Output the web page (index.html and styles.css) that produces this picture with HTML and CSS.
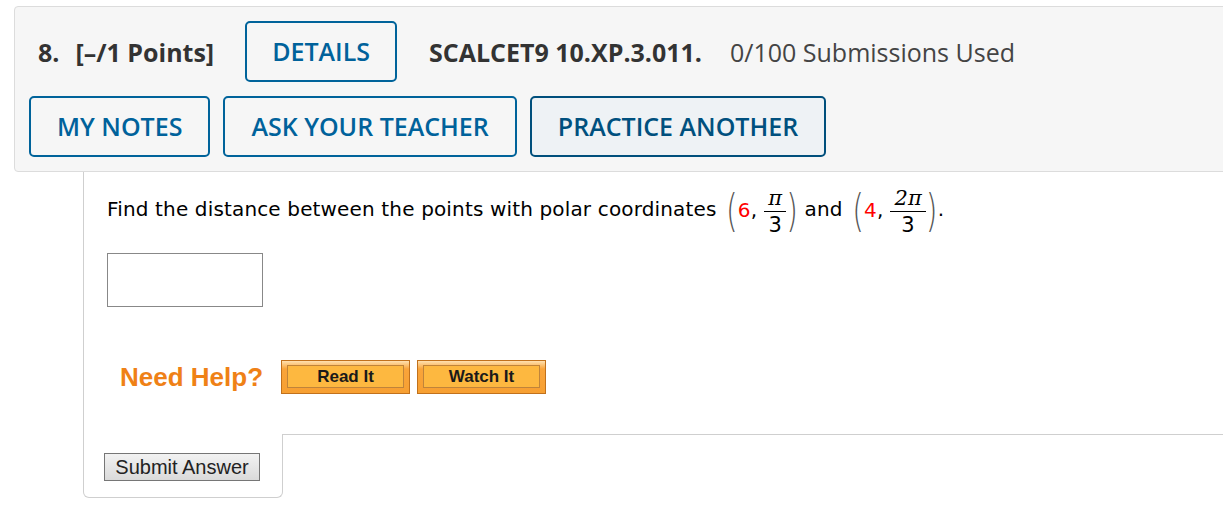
FILE: index.html
```html
<!DOCTYPE html>
<html>
<head>
<meta charset="utf-8">
<link rel="stylesheet" href="styles.css">
</head>
<body>
<div class="page">
  <div class="panel">
    <div class="row row1">
      <span class="qnum">8.<span class="pts">[–/1 Points]</span></span>
      <button class="btn">DETAILS</button>
      <span class="code">SCALCET9 10.XP.3.011.</span>
      <span class="subs">0/100 Submissions Used</span>
    </div>
    <div class="row row2">
      <button class="btn">MY NOTES</button>
      <button class="btn">ASK YOUR TEACHER</button>
      <button class="btn btn-alt">PRACTICE ANOTHER</button>
    </div>
  </div>
  <div class="question">
    <div class="qbody">
      <p class="prompt">Find the distance between the points with polar coordinates <span class="math"><span class="paren">(</span><span class="red">6</span><span class="comma">,</span><span class="frac"><span class="num">π</span><span class="den">3</span></span><span class="paren">)</span></span> and <span class="math"><span class="paren">(</span><span class="red">4</span><span class="comma">,</span><span class="frac"><span class="num">2π</span><span class="den">3</span></span><span class="paren">)</span></span>.</p>
      <input class="answer" type="text">
      <div class="help">
        <span class="help-label">Need Help?</span>
        <span class="helpbtn"><span>Read It</span></span>
        <span class="helpbtn"><span>Watch It</span></span>
      </div>
    </div>
    <div class="qfoot">
      <div class="tab"><button class="submit">Submit Answer</button></div>
      <div class="fill"></div>
    </div>
  </div>
</div>
</body>
</html>
```
FILE: styles.css
```css
html, body {
  margin: 0;
  padding: 0;
  background: #fff;
  overflow: hidden;
}
.page {
  padding: 6px 0 0 14px;
  width: 1300px;
}
.panel {
  background: #f6f6f6;
  border: 1px solid #dcdcdc;
  border-radius: 4px 0 0 4px;
  padding: 14px 0 14px 14px;
  font-family: "Open Sans", sans-serif;
  color: #333;
}
.row {
  display: flex;
  align-items: center;
}
.row1 {
  margin-bottom: 14px;
}
.row2 {
  gap: 13px;
}
.qnum {
  font-weight: 700;
  font-size: 25px;
  margin-left: 9px;
  margin-right: 31px;
  color: #333;
}
.pts {
  margin-left: 16px;
}
.btn {
  font-family: "Open Sans", sans-serif;
  font-size: 25px;
  font-weight: 600;
  color: #00629b;
  background: transparent;
  border: 2px solid #00639a;
  border-radius: 5px;
  height: 61px;
  padding: 0 26px;
  line-height: 1;
}
.row1 .btn {
  padding: 0 25px;
}
.btn-alt {
  background: #eef2f5;
  border-color: #004f7c;
  color: #00507e;
}
.code {
  font-weight: 700;
  font-size: 25px;
  margin-left: 32px;
  color: #333;
}
.subs {
  font-size: 25px;
  margin-left: 28px;
  color: #444;
}
.question {
  margin-left: 69px;
}
.qbody {
  border-left: 1px solid #cfcfcf;
  padding: 12px 0 40px 23px;
}
.prompt {
  margin: 0;
  font-family: "DejaVu Sans", Verdana, sans-serif;
  font-size: 20px;
  color: #000;
  letter-spacing: 0.15px;
}
.math {
  display: inline-flex;
  align-items: center;
  vertical-align: middle;
  margin-left: 3px;
}
.paren {
  display: inline-block;
  font-size: 30px;
  font-weight: 200;
  color: #555;
  transform: scaleY(1.5);
}
.red {
  color: #f00;
}
.comma {
  margin-right: 7px;
}
.frac {
  display: inline-flex;
  flex-direction: column;
  align-items: center;
  font-size: 21px;
  margin-top: 3px;
}
.num {
  font-family: "DejaVu Serif", serif;
  font-style: italic;
  border-bottom: 1px solid #000;
  padding: 0 4px 2px;
  line-height: 1.05;
}
.den {
  line-height: 1.05;
  padding-top: 2px;
}
.answer {
  display: block;
  margin-top: 17px;
  box-sizing: border-box;
  border: 1px solid #888;
  padding: 0;
  width: 156px;
  height: 54px;
}
.help {
  display: flex;
  align-items: center;
  margin-top: 53px;
  margin-left: 13px;
}
.help-label {
  font-family: "Liberation Sans", Arial, sans-serif;
  font-weight: 700;
  font-size: 26px;
  color: #ef8116;
  margin-right: 18px;
}
.helpbtn {
  display: inline-block;
  border: 1px solid #c1711c;
  background: linear-gradient(#ffe1b0, #f9a43a 25%, #f7a032);
  padding: 4px 5px 5px 5px;
  margin-right: 7px;
}
.helpbtn span {
  display: block;
  border: 1px solid #c0843a;
  background: #fdb840;
  font-family: "Liberation Sans", Arial, sans-serif;
  font-weight: 700;
  font-size: 17px;
  color: #1a1a1a;
  text-align: center;
  line-height: 21px;
  width: 115px;
}
.qfoot {
  display: flex;
}
.tab {
  width: 178px;
  border-left: 1px solid #cfcfcf;
  border-right: 1px solid #cfcfcf;
  border-bottom: 1px solid #cfcfcf;
  border-radius: 0 0 6px 6px;
  padding: 19px 0 16px 20px;
}
.fill {
  flex: 1;
  border-top: 1px solid #cfcfcf;
}
.submit {
  font-family: "Liberation Sans", Arial, sans-serif;
  font-size: 20px;
  color: #222;
  background: linear-gradient(#f2f2f2, #dadada);
  border: 1px solid #767676;
  height: 28px;
  width: 156px;
  padding: 0;
}
```
